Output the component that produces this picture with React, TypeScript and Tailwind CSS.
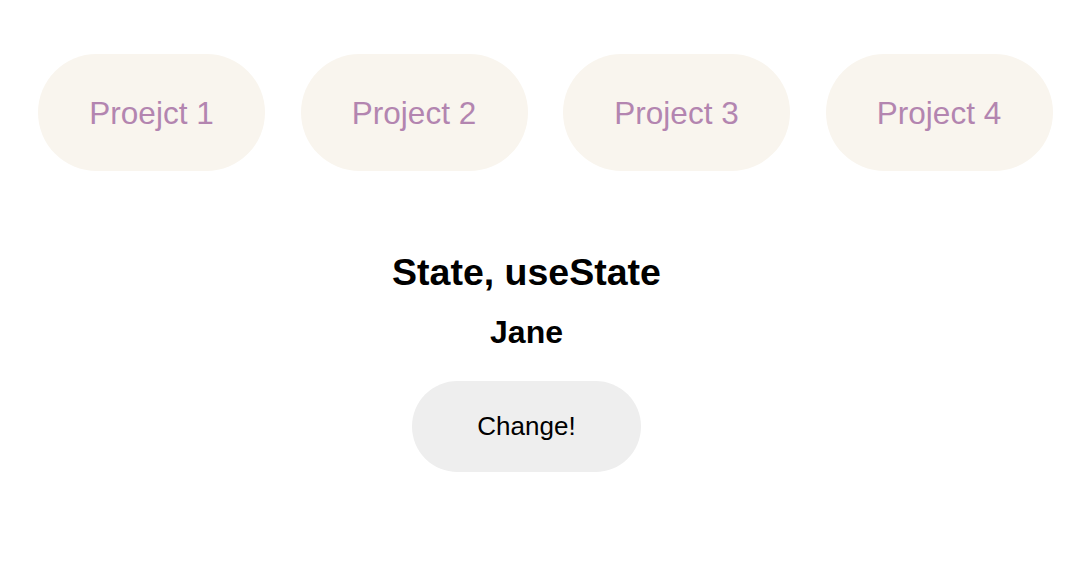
import { useState } from "react";

const projects = ["Proejct 1", "Project 2", "Project 3", "Project 4"];

export default function App() {
  const [name, setName] = useState("Jane");

  return (
    <div className="min-h-screen bg-white font-['Liberation_Sans',Arial,sans-serif]">
      <nav className="flex gap-[35.5px] pl-[38px] pt-[54px]">
        {projects.map((p) => (
          <button
            key={p}
            className="flex h-[117px] w-[227px] items-center justify-center rounded-full bg-[#f9f5ee] pt-[2px] text-[31.5px] text-[#b385b0]"
          >
            {p}
          </button>
        ))}
      </nav>

      <main className="mt-[83px] flex w-[1053px] flex-col items-center text-black">
        <h1 className="text-[37.5px] font-bold leading-none">State, useState</h1>
        <h2 className="mt-[24px] text-[32px] font-bold leading-none">{name}</h2>
        <button
          className="mt-[33px] h-[91px] w-[229px] rounded-full bg-[#eeeeee] text-[26px]"
          onClick={() => setName(name === "Jane" ? "John" : "Jane")}
        >
          Change!
        </button>
      </main>
    </div>
  );
}
